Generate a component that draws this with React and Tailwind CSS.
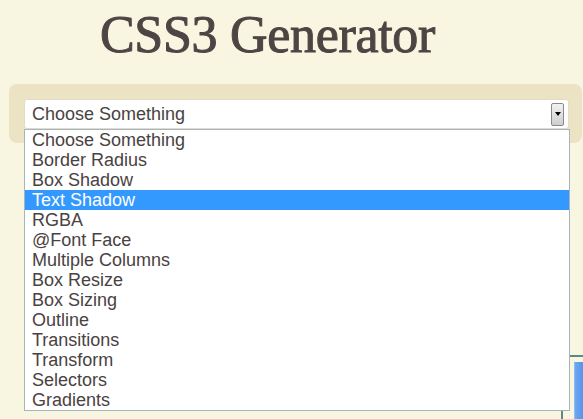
import React from "react";

const options = [
  "Choose Something",
  "Border Radius",
  "Box Shadow",
  "Text Shadow",
  "RGBA",
  "@Font Face",
  "Multiple Columns",
  "Box Resize",
  "Box Sizing",
  "Outline",
  "Transitions",
  "Transform",
  "Selectors",
  "Gradients",
];

export default function App() {
  return (
    <div className="relative w-[583px] h-[419px] overflow-hidden bg-[#f8f5e1]">
      <h1
        className="text-center text-[52px] leading-[60px] pt-[5px] pr-[48px] font-normal text-[#4d4544] tracking-[-0.3px] [-webkit-text-stroke:1px_#4d4544]"
        style={{ fontFamily: '"Liberation Serif", serif' }}
      >
        CSS3 Generator
      </h1>
      <div className="relative ml-[9px] mr-[1px] mt-[19px] h-[59px] rounded-[8px] bg-[#ebe3c4] pt-[15px] pl-[15px] pr-[13px]">
        <div
          className="flex h-[30px] items-center justify-between rounded-[3px] border border-[#e2dcc4] bg-white pl-[7px] pr-[4px] text-[18px] text-[#4a4242]"
          style={{ fontFamily: '"Liberation Sans", Arial, sans-serif' }}
        >
          <span>Choose Something</span>
          <div className="flex h-[23px] w-[13px] items-center justify-center rounded-[2px] border border-[#8a8a8a] bg-gradient-to-b from-[#f2f2f2] to-[#cfcfcf]">
            <div className="h-0 w-0 border-x-[3px] border-t-[4px] border-x-transparent border-t-black" />
          </div>
        </div>
      </div>

      <div className="absolute left-[561px] top-[355px] h-[80px] w-[30px] border-l-2 border-t-2 border-[#5b8a7e]" />
      <div className="absolute left-[574px] top-[362px] h-[80px] w-[20px] bg-gradient-to-r from-[#6fa8f0] to-[#2f78e0] border-l border-[#8cbcf5]" />

      <div
        className="absolute left-[24px] top-[129px] w-[546px] border border-[#a5b5c0] bg-white text-[18px] text-[#4a4242]"
        style={{ fontFamily: '"Liberation Sans", Arial, sans-serif' }}
      >
        {options.map((o, i) => (
          <div
            key={o}
            className={
              "h-[20px] pl-[7px] leading-[20px] whitespace-nowrap " +
              (i === 3 ? "bg-[#3399ff] text-white" : "")
            }
          >
            {o}
          </div>
        ))}
      </div>
    </div>
  );
}
